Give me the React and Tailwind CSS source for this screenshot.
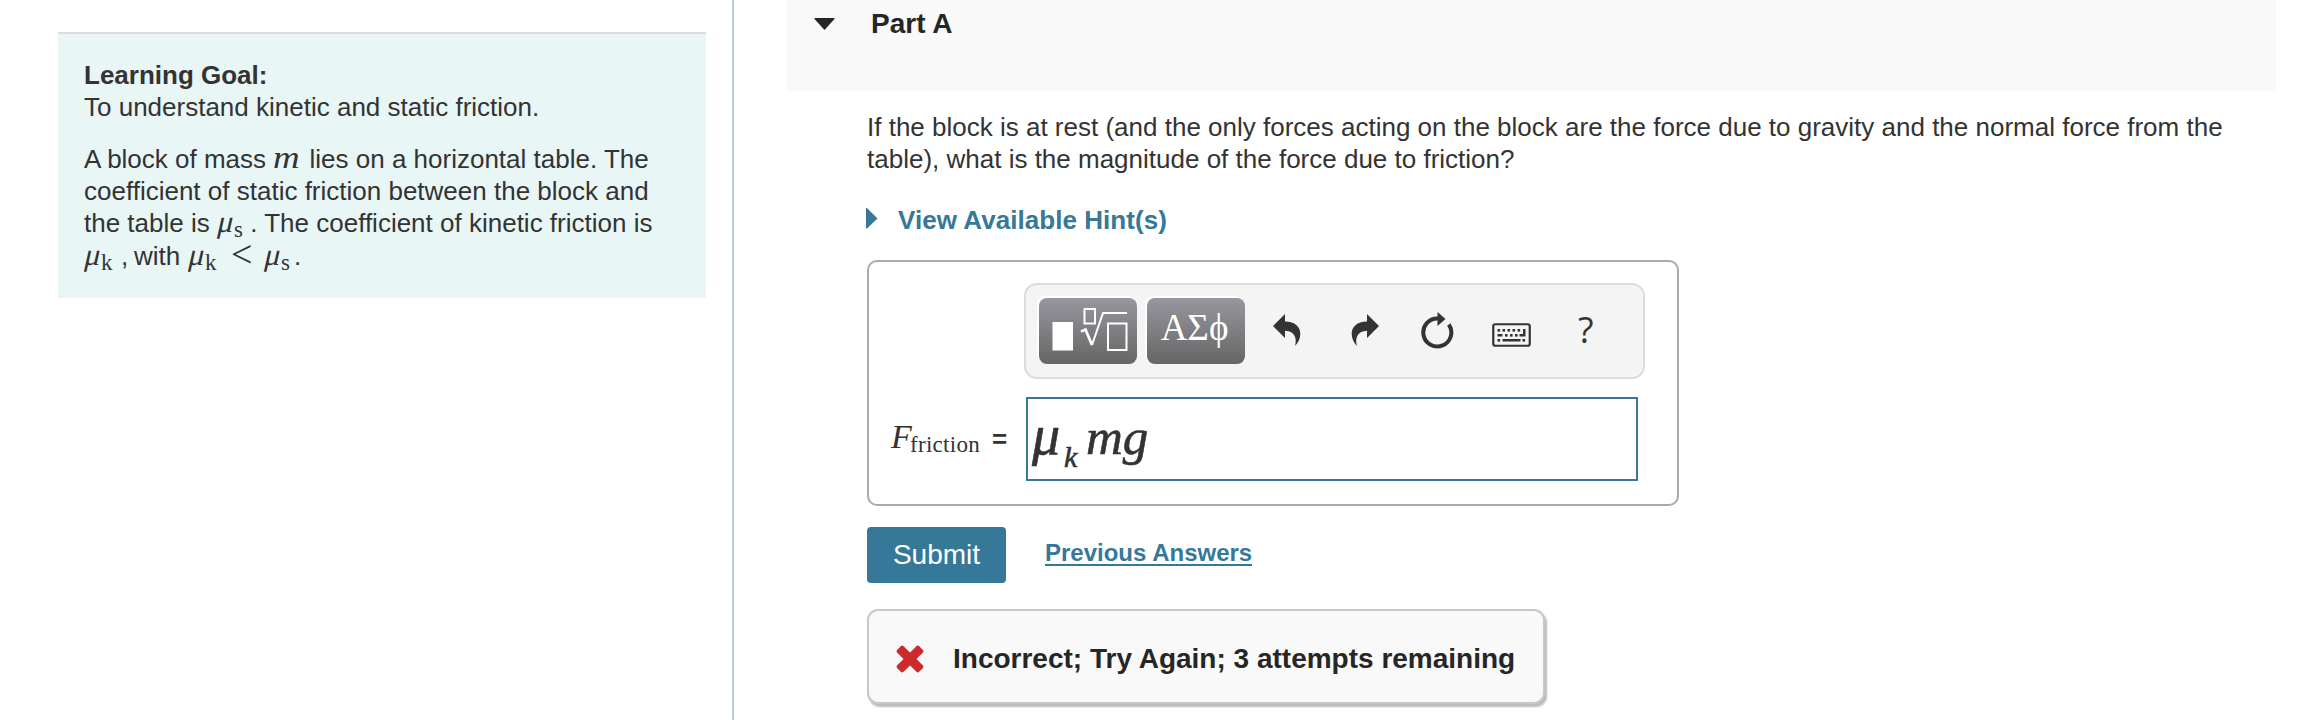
const SANS = "font-['Liberation_Sans',Arial,sans-serif]";
const MATH = "font-['Liberation_Serif','Times_New_Roman',serif]";

function MuSub({ sub, className = "" }) {
  return (
    <span className={`inline-flex items-baseline h-[26px] leading-[26px] text-[31px] ${MATH} ${className}`}>
      <i className="inline-block w-[17px] origin-bottom-left -skew-x-3">μ</i>
      <span className="relative top-[5px] text-[23px] leading-5">{sub}</span>
    </span>
  );
}

function TemplatesIcon() {
  return (
    <svg width="98" height="66" viewBox="0 0 98 66" fill="none" stroke="#fff">
      <rect x="13.500" y="24" width="20.500" height="28.500" fill="#fff" stroke="none" />
      <rect x="45.500" y="11" width="10.500" height="14.500" strokeWidth="2" />
      <path d="M42 33.500 L46.500 31.500 L53 47" strokeWidth="2.800" />
      <path d="M53 47 L64 15 H88" strokeWidth="2" />
      <rect x="69" y="25.500" width="18.500" height="26.500" strokeWidth="2" />
    </svg>
  );
}

function UndoIcon({ className = "" }) {
  return (
    <svg className={className} width="28" height="32" viewBox="0 0 28 32" fill="#333">
      <path d="M0 12 L12 0 V7.500 C22 7.500 27.500 13 27.300 20 C27.200 25 25 29 22 32 C24 25 22.500 17 12 16.700 V24 Z" />
    </svg>
  );
}

function ResetIcon() {
  return (
    <svg width="34" height="38" viewBox="0 0 34 38">
      <path d="M17 6.500 A14 14 0 1 0 27.800 12.500" fill="none" stroke="#333" strokeWidth="4" />
      <path d="M16.500 0 L24.500 7 L16.500 14 Z" fill="#333" />
    </svg>
  );
}

function KeyboardIcon() {
  const keys = (y, xs) => xs.map((x) => <rect key={`${x}-${y}`} x={x} y={y} width="2.600" height="2.600" />);
  return (
    <svg width="40" height="24" viewBox="0 0 40 24" fill="#333">
      <rect x="1.250" y="1.250" width="36.500" height="21.500" rx="2" fill="none" stroke="#333" strokeWidth="2.200" />
      {keys(6, [5.5, 10.5, 15.5, 20.5, 25.5])}
      {keys(11, [13, 18, 23])}
      {keys(16, [5.5, 30.5])}
      <path d="M5.500 11 h5 v2.600 h-5z M31 6 h2.500 v7.600 h-6 v-2.600 h3.500z M10.500 16 h18 v2.600 h-18z" />
    </svg>
  );
}

function CrossIcon() {
  return (
    <svg className="mt-[34px]" width="28" height="28" viewBox="0 0 28 28" fill="#cc2a2d">
      <rect x="-1.500" y="9.500" width="31" height="9" rx="2" transform="rotate(45 14 14)" />
      <rect x="-1.500" y="9.500" width="31" height="9" rx="2" transform="rotate(-45 14 14)" />
    </svg>
  );
}

function LearningGoal() {
  return (
    <section className="w-[648px] h-[266px] ml-[58px] mt-8 border-t-2 border-[#dcdcdc] bg-[#e8f6f6] pt-[25px] pl-[26px] text-[26px] leading-8 text-[#333] whitespace-nowrap">
      <div className="h-8 font-bold">Learning Goal:</div>
      <div className="h-8">To understand kinetic and static friction.</div>
      <div className="mt-5 h-8">
        A block of mass <i className={`inline-block w-[29px] h-[26px] leading-[26px] text-[32px] ${MATH}`}><span className="inline-block origin-left scale-x-115">m</span></i> lies on a horizontal table. The
      </div>
      <div className="h-8">coefficient of static friction between the block and</div>
      <div className="h-8">
        the table is <MuSub sub="s" className="w-[26px]" /> . The coefficient of kinetic friction is
      </div>
      <div className="h-8 flex items-baseline">
        <MuSub sub="k" className="w-[37px]" />
        <span className="w-[13px]">,</span>
        <span className="w-[54px]">with</span>
        <MuSub sub="k" className="w-[43px]" />
        <span className={`relative top-0.5 w-[33px] text-[38px] leading-[26px] ${MATH}`}>&lt;</span>
        <MuSub sub="s" className="w-[30px]" />
        <span>.</span>
      </div>
    </section>
  );
}

function Toolbar() {
  const button = "w-[98px] h-[66px] rounded-[8px] bg-linear-to-b from-[#99979f] to-[#666] shadow-[-2px_-2px_0_#fff]";
  return (
    <div className="w-[621px] h-24 ml-[155px] rounded-[13px] border-2 border-[#dcdcdc] bg-[#f4f4f4] flex items-start pt-[13px] pl-[13px]">
      <button className={button}><TemplatesIcon /></button>
      <button className={`${button} ml-[10px] text-white text-[37px] leading-[60px] pb-[6px] pr-[3px] ${MATH}`}>ΑΣϕ</button>
      <UndoIcon className="mt-4 ml-7" />
      <UndoIcon className="mt-4 ml-[50px] -scale-x-100" />
      <div className="mt-[14px] ml-[42px]"><ResetIcon /></div>
      <div className="mt-[25px] ml-[37px]"><KeyboardIcon /></div>
      <div className="mt-[12px] ml-[46px] text-[36px] leading-10 text-[#333] font-['Open_Sans',sans-serif]">?</div>
    </div>
  );
}

function AnswerBox() {
  return (
    <div className="mt-4 w-[812px] h-[246px] rounded-[10px] border-2 border-[#aaa] pt-[21px]">
      <Toolbar />
      <div className="flex mt-[18px] text-[#333]">
        <div className={`w-[157px] pl-[22px] pt-[24px] h-[84px] flex items-baseline leading-8 whitespace-nowrap ${MATH}`}>
          <i className="text-[34px] w-[19px]">F</i>
          <span className="relative top-1 text-[23px] w-[72px] tracking-[0.3px]">friction</span>
          <span className={`text-[26px] font-bold ml-[10px] ${SANS}`}>=</span>
        </div>
        <div className={`w-[612px] h-[84px] border-2 border-[#367898] flex items-baseline text-[51px] leading-[72px] italic pl-1 [-webkit-text-stroke:0.6px_#333] ${MATH}`}>
          <span className="w-[32px] text-[56px]">μ</span>
          <span className="relative top-[13px] text-[30px] w-[22px]">k</span>
          <span>mg</span>
        </div>
      </div>
    </div>
  );
}

export default function App() {
  return (
    <main className={`w-[2320px] h-[720px] overflow-hidden bg-white flex ${SANS}`}>
      <aside className="w-[734px] h-full border-r-2 border-[#bccbdc]">
        <LearningGoal />
      </aside>
      <div className="ml-[52px] w-[1490px]">
        <header className="h-[91px] bg-[#f9f9f9] flex items-start pl-7 text-[#262626]">
          <svg className="mt-[18px]" width="21" height="12" viewBox="0 0 21 12"><path d="M0.500 0 H20.500 V1 L10.500 12 L0.500 1 Z" fill="#262626" /></svg>
          <h2 className="ml-[36px] mt-2 text-[28px] leading-8 font-bold">Part A</h2>
        </header>
        <div className="pl-[81px]">
          <p className="pt-5 text-[26px] leading-8 text-[#333] whitespace-nowrap">
            If the block is at rest (and the only forces acting on the block are the force due to gravity and the normal force from the
            <br />
            table), what is the magnitude of the force due to friction?
          </p>
          <div className="mt-[29px] h-10 flex items-start text-[#367898]">
            <svg className="mt-1 -ml-px" width="12" height="21" viewBox="0 0 12 21"><path d="M0 0 H1 L11.500 10.500 L1 20.500 H0 Z" fill="#367898" /></svg>
            <a className="ml-[20px] text-[26px] leading-8 font-bold tracking-[0.05px]">View Available Hint(s)</a>
          </div>
          <AnswerBox />
          <div className="mt-[21px] h-14 flex items-start">
            <button className="w-[139px] h-14 rounded-[4px] bg-[#367898] text-white text-[28px] leading-14">Submit</button>
            <a className="ml-[39px] mt-[11px] text-[24px] leading-[30px] font-bold text-[#367898] border-b-2 border-[#367898] h-[28px]">Previous Answers</a>
          </div>
          <div className="mt-[26px] w-[678px] h-[95px] rounded-[11px] border-2 border-[#c8c8c8] bg-[#f9f9f9] shadow-[2px_3px_2px_#bbb] flex items-start pl-[27px]">
            <CrossIcon />
            <strong className="ml-[29px] mt-8 text-[28px] leading-8 text-[#262626] whitespace-nowrap">Incorrect; Try Again; 3 attempts remaining</strong>
          </div>
        </div>
      </div>
    </main>
  );
}
